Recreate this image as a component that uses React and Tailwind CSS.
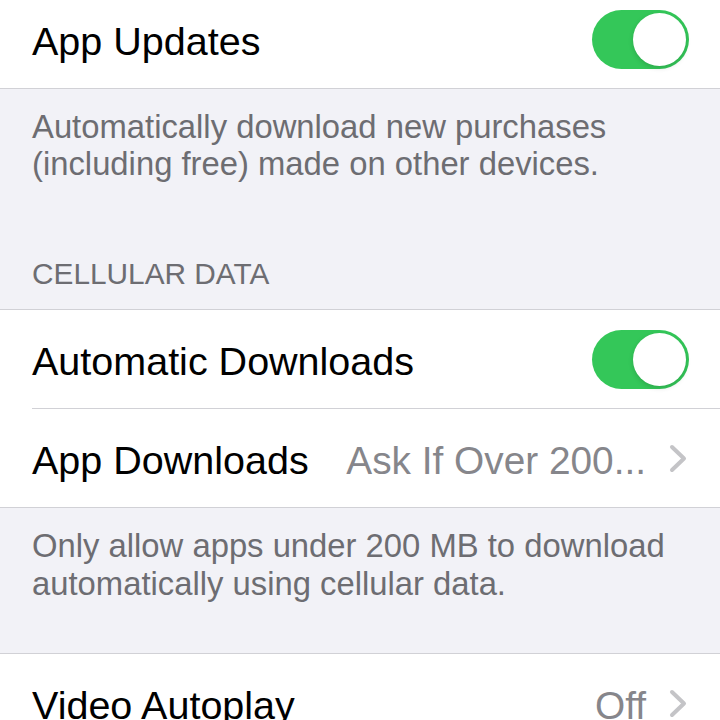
import React from "react";

const font = { fontFamily: '"Liberation Sans", Arial, sans-serif' };

function Toggle() {
  return (
    <div className="relative w-[97px] h-[59px] rounded-full bg-[#34c759] shrink-0">
      <div className="absolute right-[3px] top-[3px] w-[53px] h-[53px] rounded-full bg-white shadow-[0_2px_5px_rgba(0,0,0,0.15)]" />
    </div>
  );
}

function Chevron() {
  return (
    <svg width="18" height="29" viewBox="0 0 18 29" className="shrink-0">
      <polyline
        points="3,3 15,14.5 3,26"
        fill="none"
        stroke="#c4c4c7"
        strokeWidth="4"
        strokeLinecap="round"
        strokeLinejoin="round"
      />
    </svg>
  );
}

function Row({ title, children }) {
  return (
    <div className="h-[98px] flex items-center bg-white pl-[32px] pr-[31px]">
      <div className="pt-[6px] text-[39.5px] text-black whitespace-nowrap">{title}</div>
      <div className="flex-1" />
      {children}
    </div>
  );
}

function ValueRow({ title, value }) {
  return (
    <div className="h-[98px] flex items-center bg-white pl-[32px] pr-[33px]">
      <div className="pt-[6px] text-[39.5px] text-black whitespace-nowrap">{title}</div>
      <div className="flex-1" />
      <div className="pt-[6px] text-[38.8px] text-[#86868b] whitespace-nowrap mr-[23px]">
        {value}
      </div>
      <Chevron />
    </div>
  );
}

export default function App() {
  return (
    <div
      className="w-[720px] h-[720px] overflow-hidden bg-[#f2f2f7]"
      style={font}
    >
      {/* first cell, scrolled partly off the top */}
      <div className="-mt-[10px] border-b border-[#d1d1d6]">
        <Row title="App Updates">
          <Toggle />
        </Row>
      </div>

      <div className="pl-[32px] pr-[32px] pt-[19px] text-[32.8px] leading-[37px] text-[#6d6d72]">
        <p>Automatically download new purchases</p>
        <p>(including free) made on other devices.</p>
      </div>
      <div className="pl-[32px] pt-[74px] pb-[17px] text-[29.8px] leading-[36px] text-[#6d6d72]">
        CELLULAR DATA
      </div>

      <div className="border-t border-b border-[#d1d1d6] bg-white">
        <Row title="Automatic Downloads">
          <Toggle />
        </Row>
        <div className="ml-[32px] h-px bg-[#d1d1d6]" />
        <ValueRow title="App Downloads" value="Ask If Over 200..." />
      </div>

      <div className="pl-[32px] pr-[32px] pt-[19px] pb-[50px] text-[32.8px] leading-[38px] text-[#6d6d72]">
        <p>Only allow apps under 200 MB to download</p>
        <p>automatically using cellular data.</p>
      </div>

      <div className="border-t border-[#d1d1d6]">
        <ValueRow title="Video Autoplay" value="Off" />
      </div>
    </div>
  );
}
